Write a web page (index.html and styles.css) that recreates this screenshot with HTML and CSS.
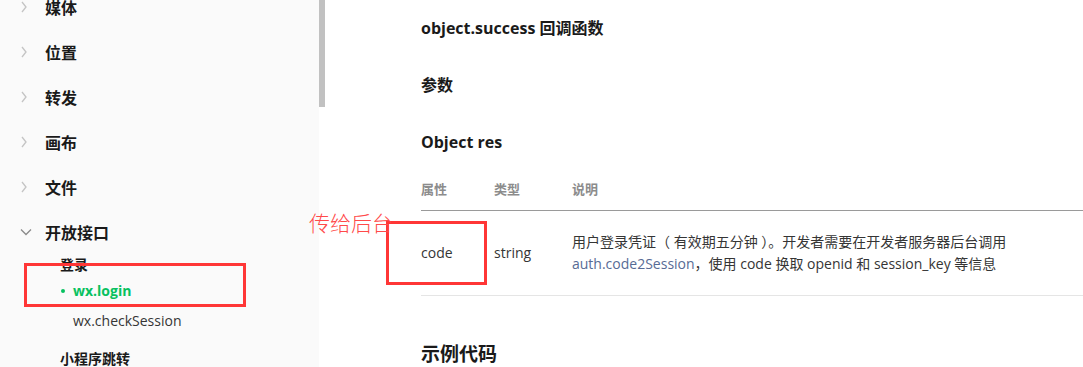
FILE: index.html
```html
<!DOCTYPE html>
<html lang="zh-CN">
<head>
    <meta charset="UTF-8">
    <title>wx.login</title>
    <link rel="stylesheet" href="styles.css">
</head>
<body>
    <div class="page">
        <div class="sidebar">
            <ul class="menu">
                <li class="menu-item"><svg class="chev" viewBox="0 0 8 12"><polyline points="2,1 6,6 2,11"/></svg>媒体</li>
                <li class="menu-item"><svg class="chev" viewBox="0 0 8 12"><polyline points="2,1 6,6 2,11"/></svg>位置</li>
                <li class="menu-item"><svg class="chev" viewBox="0 0 8 12"><polyline points="2,1 6,6 2,11"/></svg>转发</li>
                <li class="menu-item"><svg class="chev" viewBox="0 0 8 12"><polyline points="2,1 6,6 2,11"/></svg>画布</li>
                <li class="menu-item"><svg class="chev" viewBox="0 0 8 12"><polyline points="2,1 6,6 2,11"/></svg>文件</li>
                <li class="menu-item open"><svg class="chev down" viewBox="0 0 12 8"><polyline points="1,1.5 6,6.5 11,1.5"/></svg>开放接口</li>
            </ul>
            <div class="group">
                <div class="group-title">登录</div>
                <div class="sub-item active"><span class="dot"></span>wx.login</div>
                <div class="sub-item">wx.checkSession</div>
            </div>
            <div class="group">
                <div class="group-title">小程序跳转</div>
            </div>
        </div>
        <div class="scrollbar"><div class="thumb"></div></div>

        <div class="content">
            <h3 class="title">object.success 回调函数</h3>
            <h3 class="title">参数</h3>
            <h3 class="title">Object res</h3>
            <table class="params">
                <thead>
                    <tr><th class="col-name">属性</th><th class="col-type">类型</th><th>说明</th></tr>
                </thead>
                <tbody>
                    <tr>
                        <td>code</td>
                        <td>string</td>
                        <td>用户登录凭证（ 有效期五分钟 ）。开发者需要在开发者服务器后台调用<br><a href="#" class="link">auth.code2Session</a>，使用 code 换取 openid 和 session_key 等信息</td>
                    </tr>
                </tbody>
            </table>
            <h2 class="section">示例代码</h2>
        </div>
    </div>

    <!-- screenshot markup -->
    <div class="mark mark-login"></div>
    <div class="mark mark-code"></div>
    <div class="note">传给后台</div>
</body>
</html>
```

FILE: styles.css
```css
body{
    margin: 0;
    font-family: "Open Sans", "Noto Sans CJK SC", sans-serif;
    color: #1a1a1a;
    background: #fff;
    overflow: hidden;
    height: 367px;
}

.page{
    display: flex;
    height: 367px;
}

.sidebar{
    width: 319px;
    flex-shrink: 0;
    background: #fafafa;
    overflow: hidden;
}

.menu{
    list-style: none;
    margin: -16px 0 0 0;
    padding: 0;
}

.menu-item{
    display: flex;
    align-items: center;
    height: 45px;
    padding-left: 20px;
    font-size: 16px;
    font-weight: 700;
}

.chev{
    width: 8px;
    height: 12px;
    margin-right: 17px;
    fill: none;
    stroke: #c4c4c4;
    stroke-width: 1.3;
}

.chev.down{
    width: 12px;
    height: 8px;
    margin-right: 13px;
    stroke: #8a8a8a;
}

.group{
    padding-left: 60px;
}

.group + .group{
    margin-top: 12px;
}

.group-title{
    font-size: 14px;
    font-weight: 700;
    line-height: 22px;
}

.sub-item{
    position: relative;
    font-size: 14px;
    line-height: 30px;
    padding-left: 13px;
    color: #353535;
}

.sub-item.active{
    color: #07c160;
    font-weight: 700;
}

.dot{
    position: absolute;
    left: 1px;
    top: 13px;
    width: 4px;
    height: 4px;
    border-radius: 50%;
    background: #07c160;
}

.scrollbar{
    width: 6px;
    flex-shrink: 0;
}

.thumb{
    height: 107px;
    background: #c1c1c1;
}

.content{
    flex: 1;
    padding: 16px 0 0 96px;
}

.title{
    margin: 0 0 33px;
    font-size: 16px;
    font-weight: 700;
    line-height: 24px;
}

.params{
    width: 100%;
    margin-top: -8px;
    border-collapse: collapse;
    font-size: 14px;
}

.params th{
    text-align: left;
    color: #8c8c8c;
    font-size: 13px;
    font-weight: 600;
    line-height: 20px;
    padding: 0 0 11px;
    border-bottom: 1px solid #9a9a9a;
}

.col-name{
    width: 73px;
}

.col-type{
    width: 78px;
}

.params td{
    vertical-align: middle;
    line-height: 22px;
    padding: 20px 0;
    color: #353535;
    border-bottom: 1px solid #e5e5e5;
}

.link{
    color: #576b95;
    text-decoration: none;
}

.section{
    margin: 44px 0 0;
    font-size: 19px;
    font-weight: 700;
    line-height: 28px;
}

.mark{
    position: absolute;
    border: 3px solid #ff3636;
    box-sizing: border-box;
}

.mark-login{
    left: 24px;
    top: 263px;
    width: 222px;
    height: 44px;
}

.mark-code{
    left: 386px;
    top: 221px;
    width: 101px;
    height: 64px;
}

.note{
    position: absolute;
    left: 309px;
    top: 208px;
    font-family: "Noto Sans CJK SC", sans-serif;
    font-weight: 300;
    font-size: 21px;
    line-height: 28px;
    color: #ff4a4a;
}
```
